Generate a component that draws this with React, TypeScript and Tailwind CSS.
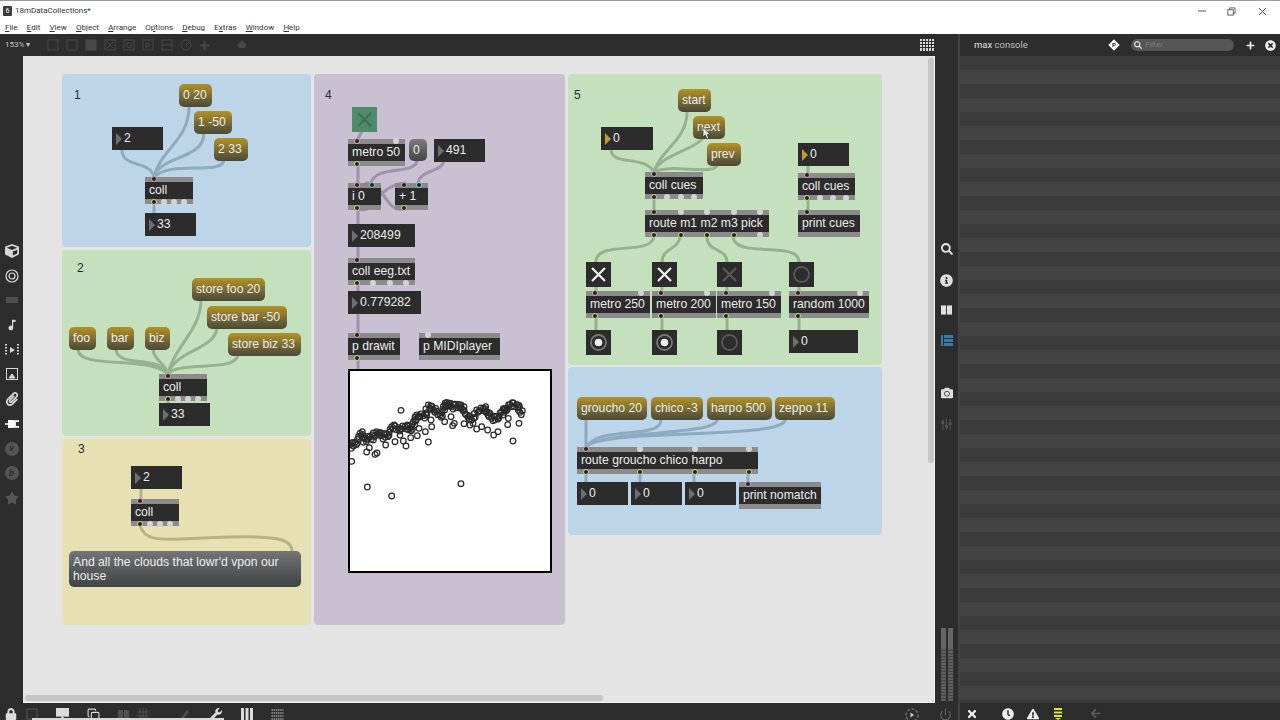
import React from 'react';
import {
  FaCube, FaPaperclip, FaStar, FaLock, FaWrench, FaClock, FaExclamationTriangle,
  FaTimes, FaArrowLeft, FaSearch, FaInfoCircle, FaCamera, FaPlus, FaTimesCircle,
} from 'react-icons/fa';
import { MdMusicNote } from 'react-icons/md';
import { Power, Copy } from 'lucide-react';

const ui = 'font-["Roboto",sans-serif]';
const patch = 'font-["Liberation_Sans",Arial,sans-serif] text-[12.2px] leading-none text-[#ececec]';

const Dot: React.FC<{ kind: string }> = ({ kind }) => {
  const ring: Record<string, string> = {
    a: 'bg-[#222] border border-[#d8a5b8]',
    t: 'bg-[#222] border border-[#9cc8c4]',
    g: 'bg-[#222] border border-[#cdd88e]',
    o: 'bg-[#d3d3d3]',
  };
  return <span className={`block shrink-0 w-[6px] h-[6px] rounded-full ${ring[kind]}`} />;
};

const Obj: React.FC<{ pos: string; text: string; top?: string; bottom?: string }> = ({ pos, text, top = 'a', bottom = 'g' }) => (
  <div className={`absolute flex flex-col h-[27px] ${patch} ${pos}`}>
    <div className="h-[5px] bg-[#8b8b8b] flex justify-between px-[6px]">
      {top.split('').map((k, i) => <span key={i} className="-mt-[1px]"><Dot kind={k} /></span>)}
    </div>
    <div className="h-[17px] bg-[#2c2c2c] flex items-center pl-[4px] whitespace-nowrap">{text}</div>
    <div className="h-[5px] bg-[#8b8b8b] flex items-center justify-between px-[6px]">
      {bottom.split('').map((k, i) => <Dot key={i} kind={k} />)}
    </div>
  </div>
);

const Num: React.FC<{ pos: string; text: string; gold?: boolean }> = ({ pos, text, gold }) => (
  <div className={`absolute h-[23px] bg-[#2c2c2c] flex items-center pl-[4px] gap-[2px] ${patch} ${pos}`}>
    <span className={`w-0 h-0 border-y-[6px] border-y-transparent border-l-[6px] ${gold ? 'border-l-[#c39b2c]' : 'border-l-[#6f6f6f]'}`} />
    <span>{text}</span>
  </div>
);

const Msg: React.FC<{ pos: string; text: string }> = ({ pos, text }) => (
  <div className={`absolute h-[23px] rounded-[5px] bg-linear-to-b from-[#b3931f] to-[#4a4936] flex items-center pl-[4px] whitespace-nowrap ${patch} ${pos}`}>
    {text}
  </div>
);

const Toggle: React.FC<{ pos: string; color: string; bg?: string }> = ({ pos, color, bg = 'bg-[#2c2c2c]' }) => (
  <div className={`absolute w-[25px] h-[25px] ${bg} ${pos}`}>
    <svg viewBox="0 0 25 25" className="w-full h-full">
      <path d="M6 6 L19 19 M19 6 L6 19" stroke={color} strokeWidth="2.2" />
    </svg>
  </div>
);

const Bang: React.FC<{ pos: string; on?: boolean }> = ({ pos, on }) => (
  <div className={`absolute w-[25px] h-[25px] bg-[#2c2c2c] ${pos}`}>
    <svg viewBox="0 0 25 25" className="w-full h-full">
      <circle cx="12.5" cy="12.5" r="7.5" fill="none" stroke={on ? '#777' : '#5a5a5a'} strokeWidth="1.8" />
      {on && <circle cx="12.5" cy="12.5" r="3.8" fill="#eee" />}
    </svg>
  </div>
);

const Label: React.FC<{ pos: string; text: string }> = ({ pos, text }) => (
  <div className={`absolute font-["Liberation_Sans",Arial,sans-serif] text-[12px] leading-none text-[#2a2a2a] ${pos}`}>{text}</div>
);

// patch cords in page coordinates
const cords: { color: string; d: string[] }[] = [
  {
    color: '#8eaabf',
    d: [
      'M189 107 C189 140 160 150 154 177',
      'M204 133 C204 160 160 155 154 177',
      'M224 160 C222 176 170 160 154 177',
      'M122 150 C122 168 150 160 154 177',
      'M154 203 L154 213',
      'M586 420 L586 447',
      'M661 420 C660 440 600 425 586 447',
      'M717 420 C715 436 600 430 586 447',
      'M785 420 C783 440 600 428 586 447',
      'M586 473 L586 482',
      'M640 473 L640 482',
      'M694 473 L694 482',
      'M748 473 L748 482',
    ],
  },
  {
    color: '#94b28d',
    d: [
      'M201 300 C201 330 175 345 168 374',
      'M217 328 C215 350 175 350 168 374',
      'M238 355 C235 373 180 360 168 374',
      'M78 350 C80 370 150 355 168 374',
      'M116 350 C118 368 160 355 168 374',
      'M153 350 C155 362 165 362 168 374',
      'M168 400 L168 403',
      'M687 112 C687 140 660 150 654 172',
      'M703 138 C695 150 660 155 654 172',
      'M717 165 C715 176 670 163 654 172',
      'M611 150 C612 166 645 155 654 172',
      'M654 199 L654 210',
      'M808 165 L808 173',
      'M808 200 L808 210',
      'M654 237 C650 256 596 240 596 262',
      'M680 237 C678 250 662 248 662 262',
      'M707 237 C707 252 727 248 727 262',
      'M733 237 C735 259 799 240 799 262',
      'M596 287 L596 291',
      'M662 287 L662 291',
      'M727 287 L727 291',
      'M799 287 L799 291',
      'M596 318 L596 330',
      'M662 318 L662 330',
      'M727 318 L727 330',
      'M799 318 L799 330',
    ],
  },
  {
    color: '#b7b187',
    d: ['M141 489 L141 499', 'M140 525 C145 546 170 538 230 537 C272 536 292 538 292 551'],
  },
  {
    color: '#9e92ad',
    d: [
      'M362 131 L358 139',
      'M358 165 L358 183',
      'M417 161 C415 175 375 165 371 183',
      'M444 161 C442 172 420 170 418 183',
      'M358 209 C374 216 375 186 405 183',
      'M405 209 C385 214 385 182 366 183',
      'M358 210 L358 224',
      'M358 246 L358 258',
      'M358 284 L358 291',
      'M358 314 L358 333',
      'M358 360 L358 369',
    ],
  },
];

// scatter plot read off the lcd, in 3x zoom coordinates
const band = [
  [15, 240], [30, 232], [45, 205], [60, 220], [75, 215], [95, 200], [110, 212], [125, 208], [140, 185], [160, 188],
  [180, 185], [195, 190], [205, 170], [215, 150], [235, 152], [250, 120], [265, 135], [285, 150], [295, 125], [305, 112],
  [320, 125], [340, 118], [350, 130], [365, 150], [380, 165], [395, 135], [415, 130], [425, 140], [440, 160], [455, 155],
  [470, 140], [480, 130], [495, 118], [515, 118], [525, 142],
];
const extras = [
  [20, 289], [67, 366], [140, 393], [348, 356], [168, 136], [65, 261], [90, 268], [96, 264], [73, 248], [122, 240],
  [150, 230], [175, 228], [183, 243], [165, 210], [197, 218], [217, 212], [222, 190], [241, 200], [250, 231], [260, 185],
  [258, 165], [299, 170], [323, 182], [357, 176], [395, 192], [410, 185], [428, 195], [446, 210], [459, 200], [488, 179],
  [504, 228], [522, 175], [490, 160], [318, 155], [328, 175], [375, 180], [55, 232], [85, 225], [245, 150],
];
const points = [
  ...extras,
  ...band,
  ...band.slice(0, -1).map(([x, y], i) => [(x + band[i + 1][0]) / 2, (y + band[i + 1][1]) / 2 + (i % 2 ? 5 : -4)]),
  ...band.map(([x, y], i) => [x + 4, y + (i % 3 === 0 ? 10 : 7)]),
  ...band.map(([x, y], i) => [x + 7, y + (i % 2 === 0 ? -5 : 3)]),
  ...band.slice(0, -1).map(([x, y], i) => [(x + band[i + 1][0]) / 2 + 3, (y + band[i + 1][1]) / 2 + (i % 2 ? -4 : 7)]),
];

const Patcher: React.FC = () => (
  <div className="absolute left-[-23px] top-[-56px] w-[1280px] h-[720px]">
    <div className="absolute left-[62px] top-[74px] w-[249px] h-[173px] rounded-[4px] bg-[#bdd5e8]" />
    <div className="absolute left-[62px] top-[250px] w-[249px] h-[186px] rounded-[4px] bg-[#c5e0bd]" />
    <div className="absolute left-[62px] top-[439px] w-[249px] h-[186px] rounded-[4px] bg-[#e6e0b3]" />
    <div className="absolute left-[314px] top-[74px] w-[251px] h-[551px] rounded-[4px] bg-[#c9c0d2]" />
    <div className="absolute left-[568px] top-[74px] w-[314px] h-[291px] rounded-[4px] bg-[#c5e0bd]" />
    <div className="absolute left-[568px] top-[367px] w-[314px] h-[168px] rounded-[4px] bg-[#bdd5e8]" />

    <svg className="absolute left-0 top-0 w-[1280px] h-[720px]" viewBox="0 0 1280 720" fill="none">
      {cords.map((c) => c.d.map((d) => <path key={d} d={d} stroke={c.color} strokeWidth="3" strokeLinecap="round" />))}
    </svg>

    {/* 1 */}
    <Label pos="left-[74px] top-[89px]" text="1" />
    <Msg pos="left-[179px] top-[84px] w-[33px]" text="0 20" />
    <Msg pos="left-[194px] top-[111px] w-[38px]" text="1 -50" />
    <Msg pos="left-[214px] top-[138px] w-[34px]" text="2 33" />
    <Num pos="left-[112px] top-[127px] w-[51px]" text="2" />
    <Obj pos="left-[145px] top-[177px] w-[48px]" text="coll" bottom="gooo" />
    <Num pos="left-[145px] top-[213px] w-[51px]" text="33" />

    {/* 2 */}
    <Label pos="left-[77px] top-[262px]" text="2" />
    <Msg pos="left-[192px] top-[278px] w-[73px]" text="store foo 20" />
    <Msg pos="left-[207px] top-[306px] w-[80px]" text="store bar -50" />
    <Msg pos="left-[228px] top-[333px] w-[73px]" text="store biz 33" />
    <Msg pos="left-[69px] top-[327px] w-[27px]" text="foo" />
    <Msg pos="left-[107px] top-[327px] w-[27px]" text="bar" />
    <Msg pos="left-[145px] top-[327px] w-[25px]" text="biz" />
    <Obj pos="left-[159px] top-[374px] w-[48px]" text="coll" bottom="gooo" />
    <Num pos="left-[159px] top-[403px] w-[51px]" text="33" />

    {/* 3 */}
    <Label pos="left-[78px] top-[443px]" text="3" />
    <Num pos="left-[131px] top-[466px] w-[51px]" text="2" />
    <Obj pos="left-[131px] top-[499px] w-[48px]" text="coll" bottom="gooo" />
    <div className={`absolute left-[69px] top-[551px] w-[232px] h-[36px] rounded-[5px] bg-linear-to-b from-[#727676] to-[#404343] pl-[4px] pt-[4px] !leading-[14px] ${patch}`}>
      And all the clouds that lowr'd vpon our house
    </div>

    {/* 4 */}
    <Label pos="left-[325px] top-[89px]" text="4" />
    <Toggle pos="left-[352px] top-[107px]" color="#3f6d58" bg="bg-[#4f8a6b]" />
    <Obj pos="left-[348px] top-[139px] w-[57px]" text="metro 50" top="ao" bottom="g" />
    <div className={`absolute left-[409px] top-[139px] w-[18px] h-[22px] rounded-[5px] bg-linear-to-b from-[#7c7c7c] to-[#454545] flex items-center pl-[4px] ${patch}`}>0</div>
    <Num pos="left-[434px] top-[139px] w-[51px]" text="491" />
    <Obj pos="left-[348px] top-[183px] w-[33px]" text="i 0" top="at" bottom="g" />
    <Obj pos="left-[395px] top-[183px] w-[33px]" text="+ 1" top="at" bottom="g" />
    <Num pos="left-[348px] top-[224px] w-[67px]" text="208499" />
    <Obj pos="left-[348px] top-[258px] w-[67px]" text="coll eeg.txt" bottom="gooo" />
    <Num pos="left-[348px] top-[291px] w-[73px]" text="0.779282" />
    <Obj pos="left-[348px] top-[333px] w-[52px]" text="p drawit" bottom="g" />
    <Obj pos="left-[419px] top-[333px] w-[81px]" text="p MIDIplayer" top="o" bottom="" />
    <div className="absolute left-[348px] top-[369px] w-[204px] h-[204px] bg-white border-2 border-black">
      <svg viewBox="350 371 200 200" className="w-full h-full" fill="none">
        {points.map(([x, y], i) => (
          <circle key={i} cx={345 + x / 3} cy={365 + y / 3} r="2.8" stroke="#2a2a2a" strokeWidth="1.25" />
        ))}
      </svg>
    </div>

    {/* 5 */}
    <Label pos="left-[574px] top-[89px]" text="5" />
    <Msg pos="left-[678px] top-[89px] w-[33px]" text="start" />
    <Msg pos="left-[693px] top-[116px] w-[32px]" text="next" />
    <Msg pos="left-[707px] top-[143px] w-[34px]" text="prev" />
    <Num pos="left-[601px] top-[127px] w-[52px]" text="0" gold />
    <Obj pos="left-[645px] top-[172px] w-[58px]" text="coll cues" bottom="gooo" />
    <Num pos="left-[798px] top-[143px] w-[51px]" text="0" gold />
    <Obj pos="left-[798px] top-[173px] w-[57px]" text="coll cues" bottom="gooo" />
    <Obj pos="left-[645px] top-[210px] w-[124px]" text="route m1 m2 m3 pick" top="aoooo" bottom="ggggo" />
    <Obj pos="left-[798px] top-[210px] w-[62px]" text="print cues" bottom="" />
    <Toggle pos="left-[586px] top-[262px]" color="#f2f2f2" />
    <Toggle pos="left-[652px] top-[262px]" color="#f2f2f2" />
    <Toggle pos="left-[717px] top-[262px]" color="#5a5a5a" />
    <Bang pos="left-[789px] top-[262px]" />
    <Obj pos="left-[586px] top-[291px] w-[64px]" text="metro 250" top="ao" bottom="g" />
    <Obj pos="left-[652px] top-[291px] w-[64px]" text="metro 200" top="ao" bottom="g" />
    <Obj pos="left-[717px] top-[291px] w-[64px]" text="metro 150" top="ao" bottom="g" />
    <Obj pos="left-[789px] top-[291px] w-[80px]" text="random 1000" top="ao" bottom="g" />
    <Bang pos="left-[586px] top-[330px]" on />
    <Bang pos="left-[652px] top-[330px]" on />
    <Bang pos="left-[717px] top-[330px]" />
    <Num pos="left-[789px] top-[330px] w-[69px]" text="0" />

    {/* 6 */}
    <Msg pos="left-[577px] top-[397px] w-[70px]" text="groucho 20" />
    <Msg pos="left-[651px] top-[397px] w-[52px]" text="chico -3" />
    <Msg pos="left-[707px] top-[397px] w-[65px]" text="harpo 500" />
    <Msg pos="left-[775px] top-[397px] w-[60px]" text="zeppo 11" />
    <Obj pos="left-[577px] top-[447px] w-[181px]" text="route groucho chico harpo" top="aooo" bottom="gggg" />
    <Num pos="left-[577px] top-[482px] w-[51px]" text="0" />
    <Num pos="left-[631px] top-[482px] w-[51px]" text="0" />
    <Num pos="left-[685px] top-[482px] w-[51px]" text="0" />
    <Obj pos="left-[739px] top-[482px] w-[82px]" text="print nomatch" bottom="" />

    {/* mouse pointer */}
    <svg className="absolute left-[702px] top-[127px] w-[9px] h-[13px]" viewBox="0 0 9 13">
      <path d="M1 0.5 L1 10 L3.4 8 L5 12 L6.8 11.2 L5.2 7.6 L8.2 7.4 Z" fill="#fff" stroke="#222" strokeWidth="0.7" />
    </svg>

    {/* scrollbars */}
    <div className="absolute left-[928px] top-[58px] w-[6px] h-[405px] rounded-full bg-[#c6c6c6]" />
    <div className="absolute left-[25px] top-[695px] w-[578px] h-[6px] rounded-full bg-[#c6c6c6]" />
  </div>
);

const TitleBar: React.FC = () => (
  <div className={`h-[21px] bg-white border-t border-[#9a9a9a] flex items-center pl-[3px] text-[8px] text-[#333] ${ui}`}>
    <span className="w-[9px] h-[10px] bg-[#3d3d3d] rounded-[1px] mr-[3px] flex items-center justify-center text-[7px] leading-none text-white">6</span>
    <span>18mDataCollections*</span>
    <div className="ml-auto flex items-center">
      <svg viewBox="0 0 8 14" className="w-[8px] h-[14px] mr-[21px]"><path d="M0 7 H8" stroke="#555" /></svg>
      <svg viewBox="0 0 10 10" className="w-[9px] h-[9px] mr-[22px]" fill="none" stroke="#555"><rect x="1" y="3" width="6" height="6" /><path d="M3 3 V1 H9 V7 H7" /></svg>
      <svg viewBox="0 0 10 10" className="w-[9px] h-[9px] mr-[13px]" stroke="#444"><path d="M1 1 L9 9 M9 1 L1 9" /></svg>
    </div>
  </div>
);

const menus: [string, string, string][] = [
  ['', 'F', 'ile'], ['', 'E', 'dit'], ['', 'V', 'iew'], ['', 'O', 'bject'], ['', 'A', 'rrange'],
  ['O', 'p', 'tions'], ['', 'D', 'ebug'], ['E', 'x', 'tras'], ['', 'W', 'indow'], ['', 'H', 'elp'],
];

const MenuBar: React.FC = () => (
  <div className={`h-[13px] bg-white flex items-center gap-[9.2px] pl-[5px] text-[8px] text-[#333] ${ui}`}>
    {menus.map(([a, u, b]) => (
      <span key={a + u + b}>{a}<span className="underline">{u}</span>{b}</span>
    ))}
  </div>
);

const Toolbar: React.FC = () => (
  <div className="h-[22px] bg-[#2d2d2d] flex items-center">
    <span className={`w-[47px] pl-[5px] text-[8px] text-[#c8c8c8] ${ui}`}>153% ▾</span>
    <div className="flex items-center gap-[7px] text-[#484848]">
      {[0, 1, 2, 3, 4, 5, 6].map((i) => (
        <svg key={i} viewBox="0 0 12 12" className="w-[12px] h-[12px]" fill="none" stroke="currentColor">
          <rect x="1" y="1" width="10" height="10" fill={i === 2 ? 'currentColor' : 'none'} />
          {i === 3 && <path d="M3 3 L9 9 M9 3 L3 9" />}
          {i === 4 && <circle cx="6" cy="6" r="2.5" />}
          {i === 5 && <path d="M4 3.5 L8 6 L4 8.5 Z" />}
          {i === 6 && <path d="M1 6 H11" />}
        </svg>
      ))}
      <svg viewBox="0 0 12 12" className="w-[12px] h-[12px]" fill="none" stroke="currentColor"><circle cx="6" cy="6" r="5" /><path d="M6 6 L9 3" /></svg>
      <FaPlus size={11} />
      <svg viewBox="0 0 12 12" className="w-[12px] h-[12px] ml-[19px]" fill="currentColor"><path d="M6 1 L11 6 L9 9 H3 L1 6 Z" /></svg>
    </div>
    <svg viewBox="0 0 14 12" className="ml-auto mr-[24px] w-[14px] h-[12px]">
      <rect width="14" height="12" fill="#d8d8d8" />
      <path d="M0 2.5 H14 M0 5.5 H14 M0 8.5 H14 M2.5 0 V12 M5.5 0 V12 M8.5 0 V12 M11.5 0 V12" stroke="#2d2d2d" />
    </svg>
  </div>
);

const DimBadge: React.FC<{ letter: string }> = ({ letter }) => (
  <span className={`w-[14px] h-[14px] rounded-full bg-[#555] flex items-center justify-center text-[9px] leading-none italic font-bold text-[#2d2d2d] ${ui}`}>{letter}</span>
);

const LeftSidebar: React.FC = () => (
  <div className="w-[23px] bg-[#2d2d2d] flex flex-col items-center gap-[10.7px] pt-[188px] text-[#d8d8d8]">
    <FaCube size={14} />
    <svg viewBox="0 0 14 14" className="w-[14px] h-[14px]" fill="none" stroke="currentColor" strokeWidth="1.2"><circle cx="7" cy="7" r="6" /><circle cx="7" cy="7" r="3" /></svg>
    <svg viewBox="0 0 14 14" className="w-[14px] h-[14px] text-[#505050]" fill="currentColor"><rect x="1" y="4" width="12" height="6" /></svg>
    <MdMusicNote size={14} />
    <svg viewBox="0 0 14 14" className="w-[14px] h-[14px]" fill="currentColor"><path d="M5 4 L10 7 L5 10 Z" /><path d="M1 1 V13 M13 1 V13" strokeDasharray="1.5 1.5" stroke="currentColor" strokeWidth="2" /></svg>
    <svg viewBox="0 0 14 14" className="w-[14px] h-[14px]" fill="none" stroke="currentColor"><rect x="1.5" y="1.5" width="11" height="11" /><path d="M4 11 L7 7 L10 11 Z" fill="currentColor" /></svg>
    <FaPaperclip size={14} />
    <svg viewBox="0 0 14 14" className="w-[14px] h-[14px] text-white" fill="currentColor"><path d="M0 6.2 H3 V7.8 H0 Z M3 3 H7 A4 4 0 0 1 7 11 H3 Z M9 3.2 H14 V5 H9 Z M9 9 H14 V10.8 H9 Z" /></svg>
    <DimBadge letter="v" />
    <DimBadge letter="b" />
    <FaStar size={14} className="text-[#555]" />
  </div>
);

const RightStrip: React.FC = () => (
  <div className="w-[23px] bg-[#2d2d2d] flex flex-col items-center pt-[187px] text-[#e0e0e0]">
    <FaSearch size={12} />
    <FaInfoCircle size={13} className="mt-[19px]" />
    <svg viewBox="0 0 12 10" className="w-[11px] h-[10px] mt-[18px]" fill="currentColor"><rect width="5.5" height="10" /><rect x="6.5" width="5.5" height="10" /></svg>
    <svg viewBox="0 0 12 11" className="w-[12px] h-[11px] mt-[20px] text-[#3a7aa8]" fill="currentColor"><rect width="2" height="11" /><path d="M3 0 H12 V3 H3 Z M3 4 H12 V7 H3 Z M3 8 H12 V11 H3 Z" /></svg>
    <FaCamera size={12} className="mt-[41px]" />
    <svg viewBox="0 0 12 12" className="w-[11px] h-[11px] mt-[20px] text-[#555]" stroke="currentColor" fill="currentColor"><path d="M2 0 V12 M6 0 V12 M10 0 V12" /><rect x="1" y="3" width="2" height="2" /><rect x="5" y="7" width="2" height="2" /><rect x="9" y="4" width="2" height="2" /></svg>
    <div className="mt-auto mb-[2px] flex gap-[2px]">
      {[0, 1].map((i) => (
        <div key={i} className="w-[5px] h-[73px] flex flex-col">
          <div className="h-[20px] bg-[#666]" />
          <div className="flex-1 bg-[repeating-linear-gradient(180deg,#5f5f5f_0,#5f5f5f_2px,#454545_2px,#454545_3px)]" />
        </div>
      ))}
    </div>
  </div>
);

const BottomBar: React.FC = () => (
  <div className="relative h-[17px] bg-[#2d2d2d] flex items-start pt-[5px] pl-[5px] text-[#dcdcdc] overflow-hidden">
    <FaLock size={12} />
    <svg viewBox="0 0 12 12" className="w-[12px] h-[12px] ml-[9px] text-[#555]" fill="none" stroke="currentColor"><rect x="1" y="1" width="10" height="10" /></svg>
    <svg viewBox="0 0 12 12" className="w-[13px] h-[13px] ml-[18px]" fill="currentColor"><rect x="0" y="0" width="12" height="8" /><path d="M3 12 L6 8 L9 12" stroke="currentColor" fill="none" /></svg>
    <Copy size={13} className="ml-[18px]" />
    <svg viewBox="0 0 12 12" className="w-[12px] h-[12px] ml-[18px] text-[#505050]" fill="currentColor"><rect y="2" width="5" height="9" /><rect x="6" y="2" width="5" height="9" /></svg>
    <svg viewBox="0 0 12 12" className="w-[12px] h-[12px] ml-[7px] text-[#505050]" stroke="currentColor"><path d="M3 0 V12 M6 0 V12 M9 0 V12 M0 4 H12 M0 8 H12" /></svg>
    <svg viewBox="0 0 12 12" className="w-[12px] h-[12px] ml-[30px] text-[#505050]" fill="currentColor"><path d="M2 10 L8 2 L10 4 L4 12 Z" /></svg>
    <FaWrench size={12} className="ml-[19px]" />
    <svg viewBox="0 0 12 12" className="w-[12px] h-[12px] ml-[19px]" fill="currentColor"><path d="M0 0 H3 V12 H0 Z M4.5 0 H7.5 V12 H4.5 Z M9 0 H12 V12 H9 Z" /></svg>
    <svg viewBox="0 0 12 12" className="w-[13px] h-[12px] ml-[18px]" stroke="currentColor"><path d="M0 2 H12 M0 5 H12 M0 8 H12 M0 11 H12" strokeDasharray="1.4 0.8" /></svg>
    <svg viewBox="0 0 14 14" className="w-[14px] h-[14px] ml-auto mr-[20px] text-[#6a6a6a]" fill="none" stroke="currentColor" strokeWidth="1.5"><circle cx="7" cy="7" r="6" strokeDasharray="3 1.5" /><path d="M5.5 4.5 L9 7 L5.5 9.5 Z" fill="#ccc" stroke="none" /></svg>
    <Power size={13} className="text-[#666] mr-[6px]" />
    <div className="absolute left-[32px] top-[15px] w-[192px] h-[2px] bg-[#d8d8d8]" />
  </div>
);

const Console: React.FC = () => (
  <div className="w-[320px] flex flex-col">
    <div className={`h-[22px] bg-[#2d2d2d] flex items-center pl-[14px] text-[9.5px] text-[#bdbdbd] ${ui}`}>
      <span className="w-[50px] whitespace-nowrap"><span className="text-[#e2e2e2]">max</span> console</span>
      <span className="ml-[86px] w-[8px] h-[8px] bg-white rotate-45 flex items-center justify-center">
        <span className="-rotate-45 text-[6px] leading-none font-bold text-[#222]">P</span>
      </span>
      <div className="ml-[13px] w-[103px] h-[12px] rounded-full bg-[#565656] flex items-center gap-[3px] pl-[3px] text-[8px] text-[#7d7d7d]">
        <FaSearch size={8} className="text-[#ddd]" />
        <span>Filter</span>
      </div>
      <FaPlus size={9} className="ml-[12px] text-[#eee]" />
      <FaTimesCircle size={11} className="ml-[10px] text-[#eee]" />
    </div>
    <div className="flex-1 bg-[repeating-linear-gradient(180deg,#3b3b3b_0,#3b3b3b_14px,#434343_14px,#434343_28px)]" />
    <div className="h-[17px] bg-[#2d2d2d] flex items-start pt-[5px] pl-[6px] overflow-hidden">
      <FaTimes size={12} className="text-[#eee]" />
      <FaClock size={12} className="text-[#eee] ml-[24px]" />
      <FaExclamationTriangle size={12} className="text-[#eee] ml-[13px]" />
      <svg viewBox="0 0 10 12" className="w-[10px] h-[12px] ml-[14px] text-[#e3e337]" fill="currentColor"><path d="M1 0 H9 V2 H1 Z M1 3.5 H9 V5.5 H1 Z M1 7 H9 V9 H1 Z M2 10 H8 L5 12 Z" /></svg>
      <FaArrowLeft size={11} className="text-[#5c5c5c] ml-[27px]" />
    </div>
  </div>
);

export default function App() {
  return (
    <div className="w-[1280px] h-[720px] flex flex-col overflow-hidden bg-[#2d2d2d]">
      <TitleBar />
      <MenuBar />
      <div className="flex-1 flex min-h-0">
        <div className="w-[958px] flex flex-col">
          <Toolbar />
          <div className="flex-1 flex min-h-0">
            <LeftSidebar />
            <div className="relative w-[912px] bg-[#e4e4e4] border-r border-b border-[#f4f4f4] overflow-hidden">
              <Patcher />
            </div>
            <RightStrip />
          </div>
          <BottomBar />
        </div>
        <div className="w-[2px] bg-[#424242]" />
        <Console />
      </div>
    </div>
  );
}
